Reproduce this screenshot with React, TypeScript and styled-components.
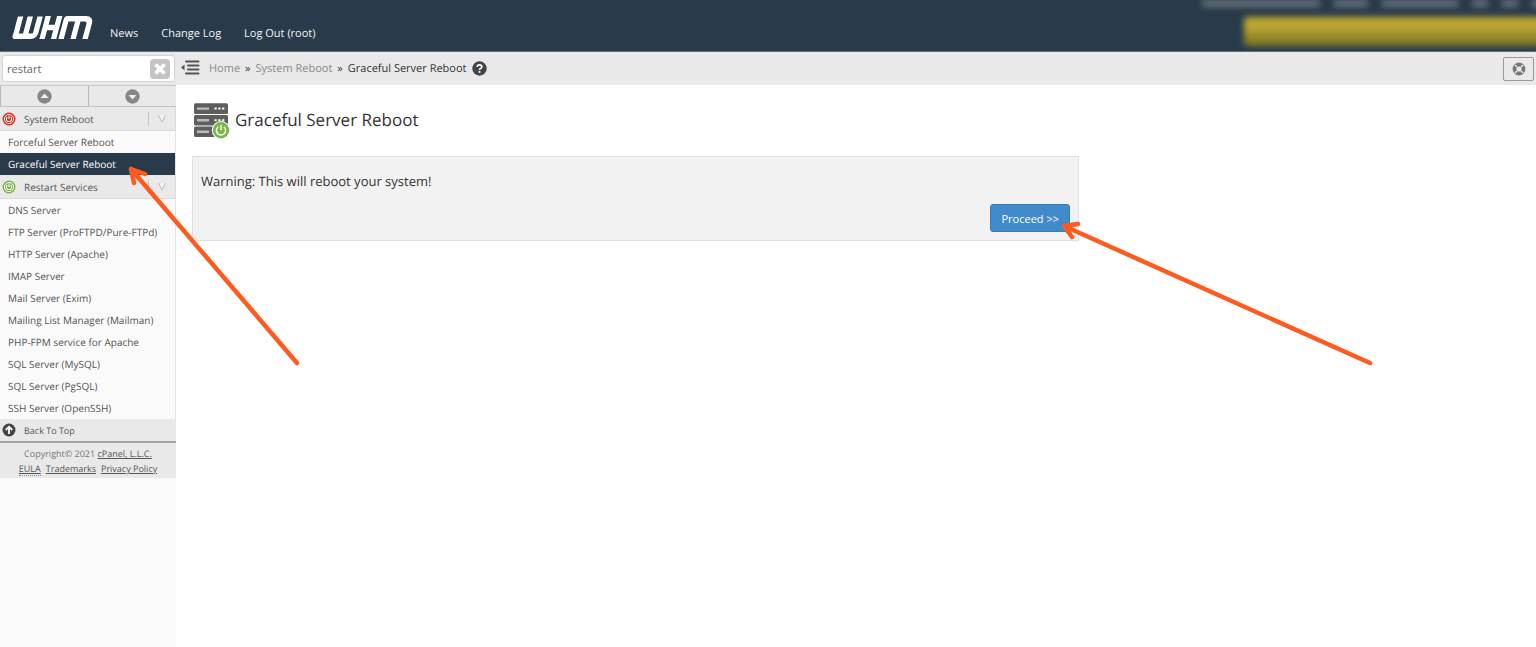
import React from 'react';
import styled, { createGlobalStyle } from 'styled-components';

const GlobalStyle = createGlobalStyle`
  * { box-sizing: border-box; }
  body {
    margin: 0;
    background: #fff;
    color: #333;
    font-family: "Open Sans", "Noto Sans", sans-serif;
    font-size: 11px;
    text-rendering: geometricPrecision;
    overflow-x: hidden;
  }
  ul { list-style: none; margin: 0; padding: 0; }
  svg { display: block; flex: none; }
`;

const Page = styled.div`
  position: relative;
  min-height: 100vh;
  display: flex;
  flex-direction: column;
`;

const Header = styled.header`
  height: 52px;
  flex: none;
  display: flex;
  padding-left: 12px;
  background: #293a4a;
  border-bottom: 1px solid #5f6e7c;
  overflow: hidden;
`;

const LogoLink = styled.a`
  padding-top: 15px;
`;

const TopNav = styled.nav`
  display: flex;
  gap: 23px;
  padding: 24px 0 0 16px;
  flex: 1;
`;

const TopLink = styled.a`
  color: #f2f4f5;
  text-decoration: none;
  line-height: 20px;
  white-space: nowrap;
`;

const Status = styled.div`
  width: 334px;
  display: flex;
  flex-direction: column;
  align-items: flex-end;
`;

const HiddenLine = styled.div`
  width: 334px;
  height: 17px;
  display: flex;
  gap: 14px;
  filter: blur(3px);
`;

const HiddenWord = styled.span<{ $w: number }>`
  width: ${p => p.$w}px;
  height: 7px;
  flex: none;
  background: #66727c;
`;

const HiddenBanner = styled.div`
  width: 300px;
  height: 29px;
  margin-right: -8px;
  flex: none;
  border-radius: 4px;
  background: linear-gradient(#c0aa30, #b8a432 40%, #8c8226 75%, #847a26);
  filter: blur(3px);
`;

const Body = styled.div`
  flex: 1;
  display: flex;
`;

const Sidebar = styled.aside`
  width: 176px;
  flex: none;
  background: #fafafa;
  font-size: 10px;
`;

const Main = styled.main`
  flex: 1;
  min-width: 0;
`;

const SearchBar = styled.div`
  height: 33px;
  padding: 3px 1px 3px 2px;
  background: #e9e9e9;
`;

const SearchField = styled.div`
  height: 27px;
  display: flex;
  align-items: center;
  padding: 0 4px;
  background: #fff;
  border: 1px solid #d4d4d4;
  border-radius: 3px;
`;

const SearchInput = styled.input`
  flex: 1;
  min-width: 0;
  padding: 0;
  border: 0;
  outline: 0;
  background: none;
  color: #666;
  font: 11px "Open Sans", sans-serif;
`;

const IconButton = styled.button`
  padding: 0;
  border: 0;
  background: none;
  cursor: pointer;
`;

const Pager = styled.div`
  height: 22px;
  display: grid;
  grid-template-columns: 1fr 1fr;
  border-top: 1px solid #c8c8c8;
  border-bottom: 1px solid #c4c4c4;
`;

const PagerButton = styled.button`
  display: flex;
  align-items: center;
  justify-content: center;
  padding: 0;
  border: 0;
  border-left: 1px solid #b8b8b8;
  background: #e9e9e9;
  cursor: pointer;
`;

const GroupHeader = styled.div`
  height: 24px;
  display: flex;
  align-items: center;
  padding: 0 8px 0 2px;
  background: #e9e9e9;
  border-bottom: 1px solid #dadada;
  border-right: 1px solid #dcdcdc;
`;

const GroupLink = styled.a`
  flex: 1;
  display: flex;
  align-items: center;
  gap: 8px;
  color: #555;
  text-decoration: none;
`;

const Toggle = styled.button`
  height: 14px;
  padding: 0 0 0 8px;
  border: 0;
  border-left: 1px solid #c4c4c4;
  background: none;
  cursor: pointer;
`;

const ItemLink = styled.a<{ $active?: boolean }>`
  display: block;
  height: 22px;
  line-height: 22px;
  padding-left: 8px;
  color: ${p => (p.$active ? '#fff' : '#555')};
  background: ${p => (p.$active ? '#293a4a' : '#fafafa')};
  border-right: 1px solid #e4e4e4;
  text-decoration: none;
  white-space: nowrap;
`;

const BackToTop = styled.a`
  height: 24px;
  display: flex;
  align-items: center;
  gap: 8px;
  padding-left: 2px;
  background: #e9e9e9;
  border-bottom: 2px solid #a2a2a2;
  color: #555;
  font-size: 9px;
  text-decoration: none;
`;

const Legal = styled.footer`
  padding: 3px 0 2px;
  background: #e9e9e9;
  color: #777;
  font-size: 9px;
  line-height: 15px;
  text-align: center;
`;

const LegalLinks = styled.div`
  display: flex;
  justify-content: center;
  gap: 5px;
`;

const LegalLink = styled.a<{ $dotted?: boolean }>`
  height: 15px;
  color: #555;
  text-decoration: underline;
  border-bottom: ${p => (p.$dotted ? '1px dotted #888' : '0')};
`;

const Toolbar = styled.div`
  height: 33px;
  display: flex;
  align-items: center;
  padding: 0 2px 0 5px;
  background: #e9e9e9;
`;

const Breadcrumb = styled.nav`
  flex: 1;
  display: flex;
  align-items: center;
  gap: 5px;
  padding-left: 9px;
  color: #333;
  white-space: nowrap;
`;

const Crumb = styled.a`
  color: #888;
  text-decoration: none;
`;

const SupportButton = styled.button`
  width: 31px;
  height: 24px;
  display: flex;
  align-items: center;
  justify-content: center;
  padding: 0;
  border: 1px solid #999;
  border-radius: 2px;
  background: #e9e9e9;
  cursor: pointer;
`;

const Content = styled.div`
  padding: 17px 16px;
`;

const TitleRow = styled.div`
  display: flex;
  align-items: flex-start;
  gap: 5px;
  height: 38px;
  margin-bottom: 16px;
`;

const Title = styled.h1`
  margin: 0;
  font-size: 17px;
  font-weight: 400;
  line-height: 36px;
  color: #333;
`;

const Panel = styled.form`
  max-width: 887px;
  display: flex;
  flex-direction: column;
  gap: 13px;
  padding: 14px 8px 8px;
  background: #f2f2f2;
  border: 1px solid #e0e0e0;
`;

const Warning = styled.p`
  margin: 0;
  font-size: 13px;
  line-height: 20px;
`;

const Proceed = styled.button`
  align-self: flex-end;
  height: 28px;
  padding: 0 10px;
  border: 1px solid #357ebd;
  border-radius: 3px;
  background: #428bca;
  color: #fff;
  font: 11px "Open Sans", sans-serif;
  cursor: pointer;
`;

const Annotations = styled.svg`
  position: absolute;
  left: 0;
  top: 0;
  pointer-events: none;
`;

const Logo = () => (
  <svg width="82" height="26" viewBox="0 0 82 26" role="img" aria-label="WHM">
    <g transform="translate(6.500 0) skewX(-15)" fill="none" stroke="#fff" strokeWidth="5.400" strokeLinejoin="round">
      <path d="M2.500 1.500 V21.200 H18.500 Q22 21.200 22 17.500 V1.500 M12.200 1.500 V21" />
      <path d="M30 1 V24 M41.500 1 V24 M30 12.500 H41" />
      <path d="M49 24 V3.700 H67.500 Q73 3.700 73 9 V24 M61 4 V24" />
    </g>
  </svg>
);

const PowerIcon = ({ color }: { color: string }) => (
  <svg width="14" height="14" viewBox="0 0 14 14" aria-hidden="true">
    <circle cx="7" cy="7" r="6.500" fill={color} />
    <circle cx="7" cy="7" r="4.600" fill="none" stroke="#fff" strokeWidth="1" />
    <path d="M5.300 5 A2.600 2.600 0 1 0 8.700 5 M7 3.500 V7" fill="none" stroke="#fff" strokeWidth="1.100" />
  </svg>
);

const ChevronIcon = () => (
  <svg width="10" height="9" viewBox="0 0 10 9" aria-hidden="true">
    <path d="M2 1 H8" stroke="#ddd" />
    <path d="M1.500 1 L5 8 L8.500 1" fill="#f4f4f4" stroke="#bbb" />
  </svg>
);

const PagerIcon = ({ down }: { down?: boolean }) => (
  <svg width="15" height="15" viewBox="0 0 15 15" aria-hidden="true">
    <circle cx="7.500" cy="7.500" r="7.200" fill="#868686" />
    <path d={down ? 'M3.500 6 H11.500 L7.500 10.500 Z' : 'M3.500 9 H11.500 L7.500 4.500 Z'} fill="#eee" />
  </svg>
);

const ClearIcon = () => (
  <svg width="20" height="20" viewBox="0 0 20 20" aria-hidden="true">
    <rect width="20" height="20" rx="4" fill="#c4c4c4" />
    <path d="M5.500 5.500 L14.500 14.500 M14.500 5.500 L5.500 14.500" stroke="#fff" strokeWidth="3.800" />
  </svg>
);

const MenuIcon = () => (
  <svg width="19" height="17" viewBox="0 0 19 17" aria-hidden="true">
    <path d="M5 1.500 H17.500 M7 5.500 H17.500 M7 9.500 H17.500 M5 13.500 H17.500" stroke="#555" strokeWidth="2" strokeLinecap="round" />
    <path d="M0 7.500 L3.500 4.500 V10.500 Z" fill="#555" />
  </svg>
);

const HelpIcon = () => (
  <svg width="15" height="15" viewBox="0 0 15 15" aria-hidden="true">
    <circle cx="7.500" cy="7.500" r="7.200" fill="#444" />
    <path d="M5.200 6 Q5.200 3.900 7.500 3.900 Q9.800 3.900 9.800 5.800 Q9.800 6.900 8.500 7.500 Q7.500 8 7.500 9" fill="none" stroke="#fff" strokeWidth="1.700" />
    <rect x="6.600" y="10" width="1.800" height="1.800" fill="#fff" />
  </svg>
);

const TopIcon = () => (
  <svg width="14" height="14" viewBox="0 0 14 14" aria-hidden="true">
    <circle cx="7" cy="7" r="6.500" fill="#444" />
    <path d="M7 11 V4 M3.700 7 L7 3.700 L10.300 7" fill="none" stroke="#fff" strokeWidth="1.800" />
  </svg>
);

const SupportIcon = () => (
  <svg width="14" height="14" viewBox="0 0 14 14" aria-hidden="true">
    <circle cx="7" cy="7" r="4.500" fill="none" stroke="#777" strokeWidth="3.800" />
    <path d="M3 3 L5 5 M11 3 L9 5 M3 11 L5 9 M11 11 L9 9" stroke="#e9e9e9" strokeWidth="1.500" />
  </svg>
);

const ServerIcon = () => (
  <svg width="38" height="38" viewBox="0 0 38 38" aria-hidden="true">
    <g fill="#5e5e5e">
      <rect x="2" y="1.300" width="34" height="10.600" rx="1.500" />
      <rect x="2" y="12.900" width="34" height="10.600" rx="1.500" />
      <rect x="2" y="24.500" width="34" height="10.600" rx="1.500" />
    </g>
    <path d="M5 6.600 H17 M5 18.200 H17 M5 29.800 H17" stroke="#bbb" strokeWidth="2.400" />
    <path d="M22.500 6.600 H33 M22.500 18.200 H33" stroke="#fff" strokeWidth="2" strokeDasharray="2.200 1.600" />
    <circle cx="29" cy="28.200" r="9.200" fill="#fff" />
    <circle cx="29" cy="28.200" r="8.200" fill="#7ab648" />
    <path d="M26.200 24.700 A4.600 4.600 0 1 0 31.800 24.700 M29 22.800 V28.200" fill="none" stroke="#fff" strokeWidth="1.400" />
  </svg>
);

const rebootItems = ['Forceful Server Reboot', 'Graceful Server Reboot'];
const serviceItems = [
  'DNS Server',
  'FTP Server (ProFTPD/Pure-FTPd)',
  'HTTP Server (Apache)',
  'IMAP Server',
  'Mail Server (Exim)',
  'Mailing List Manager (Mailman)',
  'PHP-FPM service for Apache',
  'SQL Server (MySQL)',
  'SQL Server (PgSQL)',
  'SSH Server (OpenSSH)',
];

const Group = ({ title, color, items }: { title: string; color: string; items: string[] }) => (
  <section>
    <GroupHeader>
      <GroupLink href="#">
        <PowerIcon color={color} />
        {title}
      </GroupLink>
      <Toggle type="button" aria-label={`Collapse ${title}`}>
        <ChevronIcon />
      </Toggle>
    </GroupHeader>
    <ul>
      {items.map(item => (
        <li key={item}>
          <ItemLink href="#" $active={item === 'Graceful Server Reboot'}>{item}</ItemLink>
        </li>
      ))}
    </ul>
  </section>
);

export default function App() {
  return (
    <Page>
      <GlobalStyle />
      <Header>
        <LogoLink href="#"><Logo /></LogoLink>
        <TopNav>
          <TopLink href="#">News</TopLink>
          <TopLink href="#">Change Log</TopLink>
          <TopLink href="#">Log Out (root)</TopLink>
        </TopNav>
        <Status aria-hidden="true">
          <HiddenLine>
            {[118, 34, 76, 16, 16, 20].map((w, i) => <HiddenWord key={i} $w={w} />)}
          </HiddenLine>
          <HiddenBanner />
        </Status>
      </Header>
      <Body>
        <Sidebar>
          <SearchBar>
            <SearchField>
              <SearchInput type="text" aria-label="Search" defaultValue="restart" />
              <IconButton type="button" aria-label="Clear search"><ClearIcon /></IconButton>
            </SearchField>
          </SearchBar>
          <Pager>
            <PagerButton type="button" aria-label="Collapse all"><PagerIcon /></PagerButton>
            <PagerButton type="button" aria-label="Expand all"><PagerIcon down /></PagerButton>
          </Pager>
          <Group title="System Reboot" color="#d9291c" items={rebootItems} />
          <Group title="Restart Services" color="#7ab648" items={serviceItems} />
          <BackToTop href="#"><TopIcon />Back To Top</BackToTop>
          <Legal>
            <div>Copyright© 2021 <LegalLink href="#">cPanel, L.L.C.</LegalLink></div>
            <LegalLinks>
              <LegalLink href="#" $dotted>EULA</LegalLink>
              <LegalLink href="#">Trademarks</LegalLink>
              <LegalLink href="#">Privacy Policy</LegalLink>
            </LegalLinks>
          </Legal>
        </Sidebar>
        <Main>
          <Toolbar>
            <IconButton type="button" aria-label="Collapse menu"><MenuIcon /></IconButton>
            <Breadcrumb aria-label="Breadcrumb">
              <Crumb href="#">Home</Crumb>
              <span>»</span>
              <Crumb href="#">System Reboot</Crumb>
              <span>»</span>
              <span>Graceful Server Reboot</span>
              <IconButton type="button" aria-label="Help"><HelpIcon /></IconButton>
            </Breadcrumb>
            <SupportButton type="button" aria-label="Support"><SupportIcon /></SupportButton>
          </Toolbar>
          <Content>
            <TitleRow>
              <ServerIcon />
              <Title>Graceful Server Reboot</Title>
            </TitleRow>
            <Panel>
              <Warning>Warning: This will reboot your system!</Warning>
              <Proceed type="button">Proceed &gt;&gt;</Proceed>
            </Panel>
          </Content>
        </Main>
      </Body>
      <Annotations width="1400" height="380" viewBox="0 0 1400 380" aria-hidden="true">
        <g fill="none" stroke="#ff5a1f" strokeWidth="4.500" strokeLinecap="round" strokeLinejoin="round">
          <path d="M297 363 L131 169 M145 174 L131 169 L134 183" />
          <path d="M1370 363 L1064 226 M1078 224 L1064 226 L1072 237" />
        </g>
      </Annotations>
    </Page>
  );
}
